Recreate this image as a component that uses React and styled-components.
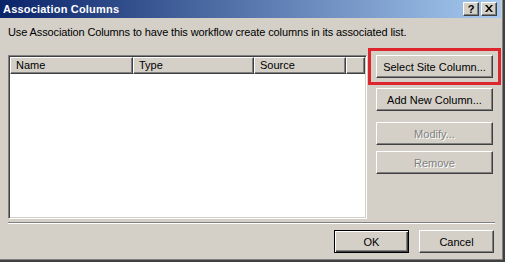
import React from 'react';
import styled, { createGlobalStyle, css } from 'styled-components';

const Global = createGlobalStyle`
  html, body { margin: 0; padding: 0; background: #d4d0c8; }
  body { font-family: "Liberation Sans", Arial, sans-serif; font-size: 11px; color: #000; }
`;

const Window = styled.div`
  width: 505px;
  height: 262px;
  box-sizing: border-box;
  background: #d4d0c8;
  border-right: 2px solid #404040;
  border-bottom: 2px solid #404040;
  box-shadow: inset -1px -1px #808080;
  padding-right: 2px;
  display: flex;
  flex-direction: column;
`;

const TitleBar = styled.div`
  height: 18px;
  display: flex;
  align-items: center;
  padding: 0 4px 0 3px;
  background: linear-gradient(to right, #0a246a, #a6caf0);
  color: #fff;
  font-weight: bold;
  font-size: 11px;
  letter-spacing: 0.2px;
`;

const Title = styled.span`
  flex: 1;
`;

const CaptionButtons = styled.div`
  display: flex;
  gap: 2px;
`;

const CaptionButton = styled.div`
  width: 16px;
  height: 14px;
  box-sizing: border-box;
  background: #d4d0c8;
  border: 1px solid;
  border-color: #fff #404040 #404040 #fff;
  box-shadow: inset -1px -1px #808080;
  color: #000;
  font-weight: bold;
  font-size: 11px;
  line-height: 12px;
  letter-spacing: 0;
  text-align: center;
`;

const Body = styled.div`
  flex: 1;
  display: flex;
  flex-direction: column;
  padding: 0 0 0 8px;
`;

const Description = styled.div`
  margin-top: 7px;
  line-height: 14px;
  white-space: nowrap;
  letter-spacing: -0.12px;
`;

const MainRow = styled.div`
  margin-top: 9px;
  display: flex;
  align-items: flex-start;
  gap: 1px;
`;

const List = styled.div`
  margin-top: 7px;
  width: 359px;
  height: 164px;
  box-sizing: border-box;
  background: #fff;
  border: 1px solid;
  border-color: #808080 #fff #fff #808080;
  box-shadow: inset 1px 1px #404040, inset -1px -1px #d4d0c8;
  padding: 1px;
`;

const HeaderRow = styled.div`
  display: flex;
  height: 17px;
`;

const HeaderCell = styled.div`
  width: ${p => p.$w}px;
  flex: ${p => (p.$grow ? 1 : 'none')};
  box-sizing: border-box;
  background: #d4d0c8;
  border: 1px solid;
  border-color: #fff #404040 #404040 #fff;
  box-shadow: inset -1px -1px #808080;
  padding-left: 5px;
  line-height: 15px;
`;

const ButtonColumn = styled.div`
  display: flex;
  flex-direction: column;
  width: 133px;
`;

const Highlight = styled.div`
  border: 3px solid #dc252c;
  padding: 4px 5px;
`;

const Button = styled.button`
  width: ${p => p.$w || 117}px;
  height: 23px;
  box-sizing: border-box;
  padding: 0;
  font-family: inherit;
  font-size: 11px;
  background: #d4d0c8;
  color: #000;
  border: 1px solid;
  border-color: #fff #404040 #404040 #fff;
  box-shadow: inset -1px -1px #808080, inset 1px 1px #d4d0c8;
  ${p => p.disabled && css`
    color: #808080;
    text-shadow: 1px 1px #fff;
  `}
  ${p => p.$default && css`
    border-color: #000;
    box-shadow: inset 1px 1px #fff, inset -1px -1px #404040, inset -2px -2px #808080;
  `}
`;

const SideButton = styled(Button)`
  margin: ${p => p.$top}px 0 0 8px;
`;

const Separator = styled.div`
  margin-top: 3px;
  width: 487px;
  height: 0;
  border-top: 1px solid #808080;
  border-bottom: 1px solid #fff;
`;

const Footer = styled.div`
  margin-top: 6px;
  display: flex;
  justify-content: flex-end;
  gap: 10px;
  padding-right: 7px;
`;

export default function App() {
  return (
    <>
      <Global />
      <Window>
        <TitleBar>
          <Title>Association Columns</Title>
          <CaptionButtons>
            <CaptionButton>?</CaptionButton>
            <CaptionButton>
              <svg width="8" height="7" viewBox="0 0 8 7" style={{ display: 'block', margin: '2px auto 0' }}>
                <path d="M0 0h2l2 2.5L6 0h2L5 3.5 8 7H6L4 4.5 2 7H0l3-3.5z" fill="#000" />
              </svg>
            </CaptionButton>
          </CaptionButtons>
        </TitleBar>
        <Body>
          <Description>Use Association Columns to have this workflow create columns in its associated list.</Description>
          <MainRow>
            <List>
              <HeaderRow>
                <HeaderCell $w={123}>Name</HeaderCell>
                <HeaderCell $w={121}>Type</HeaderCell>
                <HeaderCell $w={92}>Source</HeaderCell>
                <HeaderCell $grow />
              </HeaderRow>
            </List>
            <ButtonColumn>
              <Highlight>
                <Button>Select Site Column...</Button>
              </Highlight>
              <SideButton $top={3}>Add New Column...</SideButton>
              <SideButton $top={11} disabled>Modify...</SideButton>
              <SideButton $top={6} disabled>Remove</SideButton>
            </ButtonColumn>
          </MainRow>
          <Separator />
          <Footer>
            <Button $w={75} $default>OK</Button>
            <Button $w={75}>Cancel</Button>
          </Footer>
        </Body>
      </Window>
    </>
  );
}
